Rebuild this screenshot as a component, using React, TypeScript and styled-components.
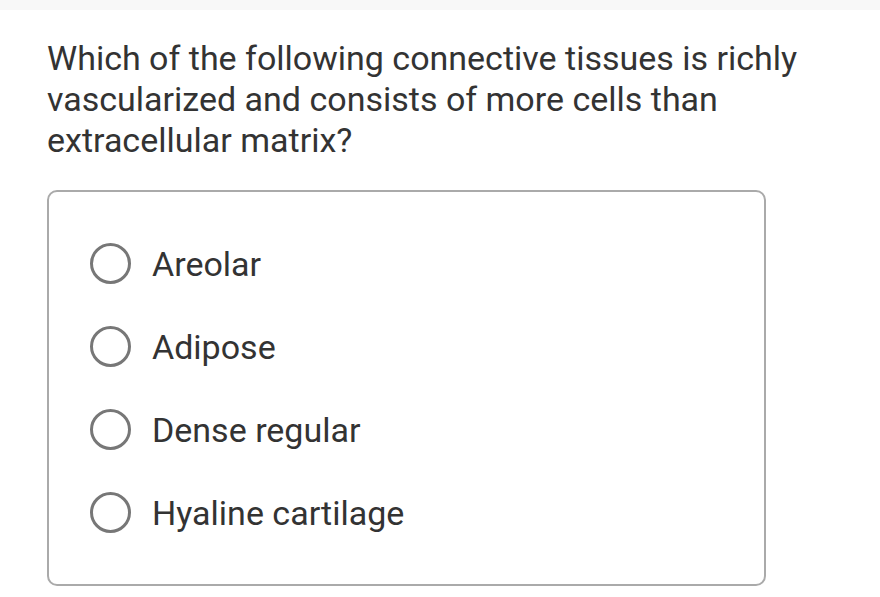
import React from "react";
import styled, { createGlobalStyle } from "styled-components";

const Global = createGlobalStyle`
  html, body { margin: 0; padding: 0; background: #fff; }
  body { font-family: Roboto, "Noto Sans", sans-serif; color: #333; }
`;

const TopBar = styled.div`
  height: 10px;
  background: #f8f8f8;
`;

const Content = styled.div`
  padding: 28px 0 0 47px;
`;

const Question = styled.p`
  margin: 0;
  width: 800px;
  font-size: 34px;
  line-height: 41px;
  color: #333;
`;

const Choices = styled.div`
  margin-top: 29px;
  width: 674px;
  border: 2px solid #aaa;
  border-radius: 10px;
  padding: 30px 0 30px 41px;
  box-sizing: content-box;
`;

const Option = styled.label`
  display: flex;
  align-items: center;
  height: 83px;
  gap: 21px;
  font-size: 34px;
  color: #333;
`;

const Radio = styled.span`
  width: 41px;
  height: 41px;
  box-sizing: border-box;
  border: 3px solid #777;
  border-radius: 50%;
  flex: none;
`;

const options = ["Areolar", "Adipose", "Dense regular", "Hyaline cartilage"];

export default function App() {
  return (
    <>
      <Global />
      <TopBar />
      <Content>
        <Question>
          Which of the following connective tissues is richly vascularized and consists of more cells than extracellular matrix?
        </Question>
        <Choices>
          {options.map((o) => (
            <Option key={o}>
              <Radio />
              {o}
            </Option>
          ))}
        </Choices>
      </Content>
    </>
  );
}
